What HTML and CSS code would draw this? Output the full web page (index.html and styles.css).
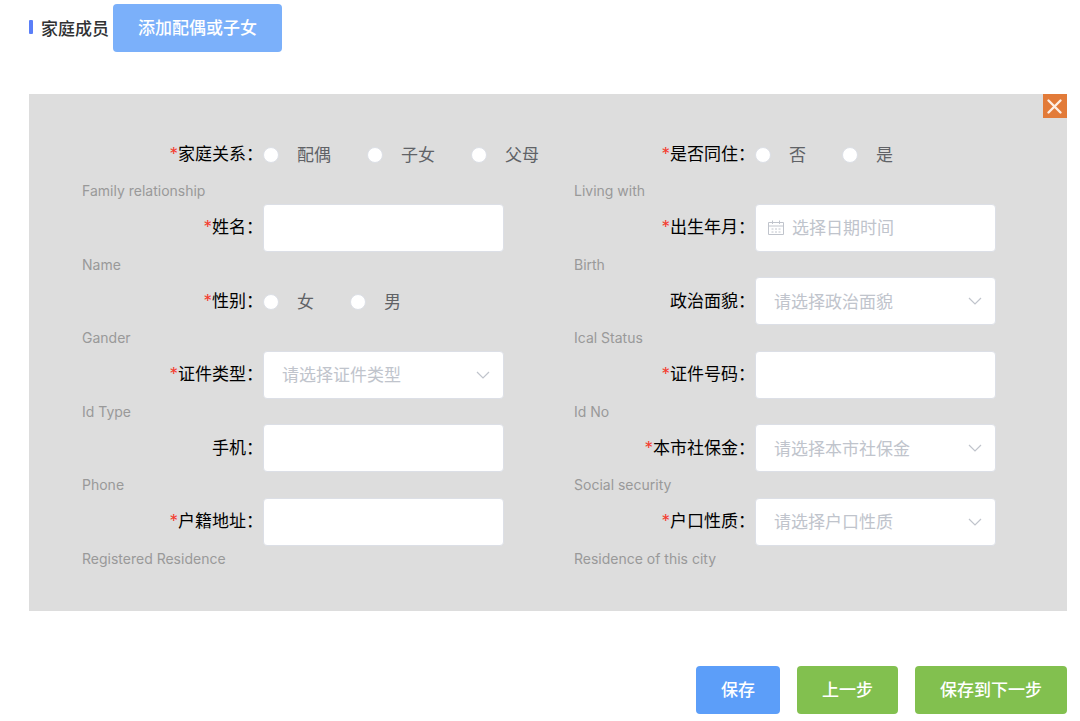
FILE: index.html
```html
<!DOCTYPE html>
<html lang="zh-CN">
<head>
    <meta charset="UTF-8">
    <meta name="viewport" content="width=device-width, initial-scale=1">
    <title>家庭成员</title>
    <link rel="stylesheet" href="styles.css">
</head>
<body>

<div class="header">
    <h2 class="title">家庭成员</h2>
    <button type="button" class="btn btn-add">添加配偶或子女</button>
</div>

<form id="memberForm" class="panel">
    <button type="button" class="close" aria-label="删除">
        <svg width="24" height="24" viewBox="0 0 24 24"><path d="M5.5 6.5l12 12M17.500 6.500L5.500 18.500" fill="none" stroke="#fdeee4" stroke-width="2.400" stroke-linecap="round"/></svg>
    </button>

    <div class="fields">
        <div class="item" role="radiogroup" aria-labelledby="relationLabel">
            <span class="label" id="relationLabel"><i>*</i>家庭关系：</span>
            <div class="control radios">
                <label class="radio"><input type="radio" name="relation">配偶</label>
                <label class="radio"><input type="radio" name="relation">子女</label>
                <label class="radio"><input type="radio" name="relation">父母</label>
            </div>
            <div class="en">Family relationship</div>
        </div>

        <div class="item" role="radiogroup" aria-labelledby="liveLabel">
            <span class="label" id="liveLabel"><i>*</i>是否同住：</span>
            <div class="control radios">
                <label class="radio"><input type="radio" name="live">否</label>
                <label class="radio"><input type="radio" name="live">是</label>
            </div>
            <div class="en">Living with</div>
        </div>

        <div class="item">
            <label class="label" for="name"><i>*</i>姓名：</label>
            <div class="control"><input type="text" class="input" id="name"></div>
            <div class="en">Name</div>
        </div>

        <div class="item">
            <label class="label" for="birth"><i>*</i>出生年月：</label>
            <div class="control">
                <input type="text" class="input input-date" id="birth" placeholder="选择日期时间">
                <svg class="icon-date" width="16" height="16" viewBox="0 0 16 16" fill="none" stroke="#c0c4cc">
                    <path d="M.5 2.5h15v12H.5zM.5 6h15M4.5 .5v3.500M11.5 .5v3.500"/>
                    <path d="M3.5 9h2M7 9h2M10.5 9h2M3.5 12h2M7 12h2M10.5 12h2"/>
                </svg>
            </div>
            <div class="en">Birth</div>
        </div>

        <div class="item" role="radiogroup" aria-labelledby="genderLabel">
            <span class="label" id="genderLabel"><i>*</i>性别：</span>
            <div class="control radios">
                <label class="radio"><input type="radio" name="gender">女</label>
                <label class="radio"><input type="radio" name="gender">男</label>
            </div>
            <div class="en">Gander</div>
        </div>

        <div class="item">
            <label class="label" for="political">政治面貌：</label>
            <div class="control">
                <select class="input select" id="political"><option value="">请选择政治面貌</option></select>
                <svg class="arrow" width="14" height="8" viewBox="0 0 14 8"><path d="M1 1l6 6 6-6" fill="none" stroke="#c0c4cc" stroke-width="1.200"/></svg>
            </div>
            <div class="en">Ical Status</div>
        </div>

        <div class="item">
            <label class="label" for="idType"><i>*</i>证件类型：</label>
            <div class="control">
                <select class="input select" id="idType"><option value="">请选择证件类型</option></select>
                <svg class="arrow" width="14" height="8" viewBox="0 0 14 8"><path d="M1 1l6 6 6-6" fill="none" stroke="#c0c4cc" stroke-width="1.200"/></svg>
            </div>
            <div class="en">Id Type</div>
        </div>

        <div class="item">
            <label class="label" for="idNo"><i>*</i>证件号码：</label>
            <div class="control"><input type="text" class="input" id="idNo"></div>
            <div class="en">Id No</div>
        </div>

        <div class="item">
            <label class="label" for="phone">手机：</label>
            <div class="control"><input type="tel" class="input" id="phone"></div>
            <div class="en">Phone</div>
        </div>

        <div class="item">
            <label class="label" for="social"><i>*</i>本市社保金：</label>
            <div class="control">
                <select class="input select" id="social"><option value="">请选择本市社保金</option></select>
                <svg class="arrow" width="14" height="8" viewBox="0 0 14 8"><path d="M1 1l6 6 6-6" fill="none" stroke="#c0c4cc" stroke-width="1.200"/></svg>
            </div>
            <div class="en">Social security</div>
        </div>

        <div class="item">
            <label class="label" for="address"><i>*</i>户籍地址：</label>
            <div class="control"><input type="text" class="input" id="address"></div>
            <div class="en">Registered Residence</div>
        </div>

        <div class="item">
            <label class="label" for="residence"><i>*</i>户口性质：</label>
            <div class="control">
                <select class="input select" id="residence"><option value="">请选择户口性质</option></select>
                <svg class="arrow" width="14" height="8" viewBox="0 0 14 8"><path d="M1 1l6 6 6-6" fill="none" stroke="#c0c4cc" stroke-width="1.200"/></svg>
            </div>
            <div class="en">Residence of this city</div>
        </div>
    </div>
</form>

<div class="footer">
    <button type="submit" form="memberForm" class="btn btn-save">保存</button>
    <button type="button" class="btn btn-step">上一步</button>
    <button type="button" class="btn btn-step">保存到下一步</button>
</div>

</body>
</html>
```

FILE: styles.css
```css
* {
    box-sizing: border-box;
}
body {
    margin: 0;
    padding: 4px 13px 7px 29px;
    background: #fff;
    color: #000;
    font-family: "Noto Sans CJK SC", sans-serif;
    font-size: 17px;
}
button, input, select {
    font: inherit;
}

/* header */
.header {
    display: flex;
    align-items: center;
    gap: 4px;
    margin-bottom: 42px;
}
.title {
    display: flex;
    align-items: center;
    gap: 8px;
    margin: 0;
    padding-bottom: 2px;
    color: #303133;
    font-size: 17px;
    font-weight: 500;
}
.title::before {
    content: "";
    width: 4px;
    height: 14px;
    border-radius: 1px;
    background: #5b7ff8;
}

/* buttons */
.btn {
    height: 48px;
    padding: 0 25px 3px;
    border: none;
    border-radius: 4px;
    color: #fff;
    font-weight: 500;
    cursor: pointer;
}
.btn-add {
    background: #7bb0fa;
}
.btn-save {
    background: #5c9ef9;
}
.btn-step {
    background: #82c04f;
}

/* member form */
.panel {
    position: relative;
    padding: 36px 1px 40px 53px;
    background: #ddd;
}
.close {
    position: absolute;
    top: 0;
    right: 0;
    display: flex;
    padding: 0;
    border: none;
    background: #e27b39;
    cursor: pointer;
}
.fields {
    display: grid;
    grid-template-columns: 1fr 1fr;
    grid-auto-rows: 1fr;
    min-height: 441px;
}
.item {
    display: grid;
    grid-template-columns: 181px 1fr;
    grid-template-rows: 48px 25px;
    align-items: center;
}
.label {
    padding-bottom: 2px;
    line-height: 24px;
    text-align: right;
}
.label i {
    color: #f43b2f;
    font-family: Inter, sans-serif;
    font-style: normal;
}
.en {
    grid-column: 1 / 3;
    color: #999;
    font-family: Inter, sans-serif;
    font-size: 14px;
    line-height: 25px;
}
.control {
    position: relative;
    margin-right: 70px;
}
.input {
    display: block;
    width: 100%;
    height: 48px;
    padding: 0 18px 2px;
    border: 1px solid #dcdfe6;
    border-radius: 4px;
    outline: none;
    background: #fff;
    color: #606266;
}
.input::placeholder {
    color: #c0c4cc;
    opacity: 1;
}
.input-date {
    padding-left: 36px;
}
.icon-date {
    position: absolute;
    top: 16px;
    left: 13px;
}
.select {
    appearance: none;
    color: #c0c4cc;
}
.arrow {
    position: absolute;
    top: 20px;
    right: 14px;
    pointer-events: none;
}

/* radios */
.radios {
    display: flex;
    gap: 36px;
    margin-right: 0;
}
.radio {
    display: flex;
    align-items: center;
    gap: 18px;
    color: #606266;
    line-height: 24px;
    white-space: nowrap;
}
.radio input {
    appearance: none;
    width: 16px;
    height: 16px;
    margin: 2px 0 0;
    border: 1px solid #dcdfe6;
    border-radius: 50%;
    background: #fff;
}
.radio input:checked {
    border: 4px solid #409eff;
}

/* footer */
.footer {
    display: flex;
    justify-content: flex-end;
    gap: 17px;
    margin-top: 55px;
}
```
